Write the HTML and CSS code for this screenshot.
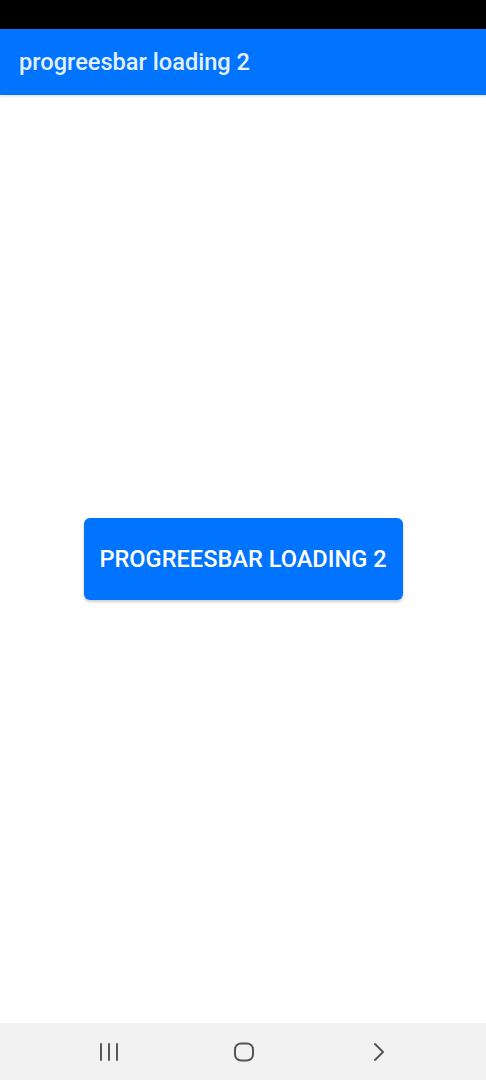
FILE: index.html
```html
<!DOCTYPE html>
<html>
<head>
  <title>progreesbar loading 2</title>
  <link rel="stylesheet" href="styles.css">
</head>
<body>
  <div class="status-bar"></div>
  <div class="app-bar">
    <h1>progreesbar loading 2</h1>
  </div>
  <div class="content">
    <button class="main-button">PROGREESBAR LOADING 2</button>
  </div>
  <div class="nav-bar">
    <div class="nav-item">
      <svg width="20" height="18" viewBox="0 0 20 18">
        <path d="M2 1v16M10 1v16M18 1v16" stroke="#555" stroke-width="2" fill="none" stroke-linecap="round"/>
      </svg>
    </div>
    <div class="nav-item">
      <svg width="22" height="20" viewBox="0 0 22 20">
        <rect x="2" y="1.5" width="18" height="17" rx="6" stroke="#555" stroke-width="2" fill="none"/>
      </svg>
    </div>
    <div class="nav-item">
      <svg width="14" height="20" viewBox="0 0 14 20">
        <path d="M3 2l8 8-8 8" stroke="#555" stroke-width="2" fill="none" stroke-linecap="round" stroke-linejoin="round"/>
      </svg>
    </div>
  </div>
</body>
</html>
```

FILE: styles.css
```css
body {
  margin: 0;
  height: 1080px;
  display: flex;
  flex-direction: column;
  font-family: Roboto, "Noto Sans", sans-serif;
  background: #fff;
}

.status-bar {
  height: 29px;
  background: #000;
}

.app-bar {
  height: 66px;
  background: #0073ff;
  display: flex;
  align-items: center;
  padding-left: 19px;
  box-shadow: 0 1px 3px rgba(0, 0, 0, 0.15);
}

.app-bar h1 {
  margin: 0;
  font-size: 23.6px;
  font-weight: 500;
  color: #e3f1ff;
}

.content {
  flex: 1;
  display: flex;
  align-items: center;
  justify-content: center;
}

.main-button {
  width: 319px;
  height: 82px;
  border: none;
  border-radius: 6px;
  background: #0073ff;
  color: #fff;
  font-family: Roboto, sans-serif;
  font-size: 23.6px;
  font-weight: 500;
  padding: 0;
  box-shadow: 0 2px 3px rgba(0, 0, 0, 0.2);
}

.nav-bar {
  height: 57px;
  background: #f2f2f2;
  display: flex;
  align-items: center;
  padding-left: 41px;
}

.nav-item {
  width: 135px;
  display: flex;
  justify-content: center;
}
```
